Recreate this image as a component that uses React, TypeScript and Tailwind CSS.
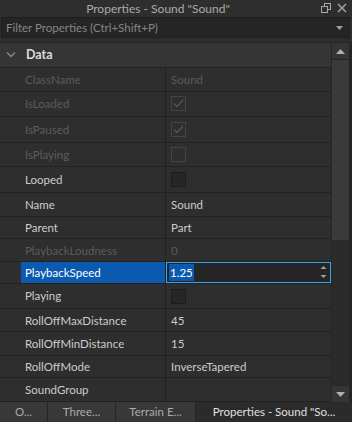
import React from 'react';

type Row = {
  name: string;
  h: number;
  kind: 'text' | 'check' | 'input';
  value?: string;
  checked?: boolean;
  disabled?: boolean;
};

const rows: Row[] = [
  { name: 'ClassName', h: 24, kind: 'text', value: 'Sound', disabled: true },
  { name: 'IsLoaded', h: 26, kind: 'check', checked: true, disabled: true },
  { name: 'IsPaused', h: 26, kind: 'check', checked: true, disabled: true },
  { name: 'IsPlaying', h: 25, kind: 'check', checked: false, disabled: true },
  { name: 'Looped', h: 26, kind: 'check', checked: false },
  { name: 'Name', h: 24, kind: 'text', value: 'Sound' },
  { name: 'Parent', h: 23, kind: 'text', value: 'Part' },
  { name: 'PlaybackLoudness', h: 23, kind: 'text', value: '0', disabled: true },
  { name: 'PlaybackSpeed', h: 22, kind: 'input', value: '1.25' },
  { name: 'Playing', h: 26, kind: 'check', checked: false },
  { name: 'RollOffMaxDistance', h: 23, kind: 'text', value: '45' },
  { name: 'RollOffMinDistance', h: 24, kind: 'text', value: '15' },
  { name: 'RollOffMode', h: 23, kind: 'text', value: 'InverseTapered' },
  { name: 'SoundGroup', h: 24, kind: 'text', value: '' },
];

const font = { fontFamily: '"Lato", "Noto Sans", sans-serif' };

function CheckBox({ checked, disabled }: { checked?: boolean; disabled?: boolean }) {
  return (
    <div
      className={`w-[15px] h-[15px] border flex items-center justify-center ${
        disabled ? 'border-[#444444] bg-[#2e2e2e]' : 'border-[#1c1c1c] bg-[#262626]'
      }`}
    >
      {checked && (
        <svg width="11" height="9" viewBox="0 0 11 9">
          <path d="M1 4.5 L4 7.5 L10 1" fill="none" stroke="#555555" strokeWidth="1.3" />
        </svg>
      )}
    </div>
  );
}

function PropRow({ row }: { row: Row }) {
  const selected = row.kind === 'input';
  const nameColor = row.disabled ? 'text-[#5c5c5c]' : selected ? 'text-white' : 'text-[#cccccc]';
  return (
    <div className="flex border-b border-[#222222]" style={{ height: row.h }}>
      <div className="w-[21px] shrink-0" />
      <div
        className={`w-[144px] shrink-0 flex items-center pl-[4px] text-[11.5px] ${nameColor} ${
          selected ? 'bg-[#0b5aaf]' : ''
        }`}
      >
        {row.name}
      </div>
      <div className="w-px bg-[#222222] shrink-0" />
      {row.kind === 'input' ? (
        <div className="flex-1 flex items-center justify-between border border-[#35a6e8] bg-[#252525] pl-[2px] pr-[3px]">
          <span className="bg-[#0b5aaf] text-white text-[11.5px] leading-[17px] px-px">{row.value}</span>
          <svg width="7" height="14" viewBox="0 0 7 14">
            <path d="M0.5 4 L3.5 1 L6.5 4 Z" fill="#a0a0a0" />
            <path d="M0.5 10 L3.5 13 L6.5 10 Z" fill="#a0a0a0" />
          </svg>
        </div>
      ) : (
        <div className="flex-1 flex items-center pl-[5px]">
          {row.kind === 'check' ? (
            <CheckBox checked={row.checked} disabled={row.disabled} />
          ) : (
            <span className={`text-[11.5px] ${row.disabled ? 'text-[#5c5c5c]' : 'text-[#cccccc]'}`}>
              {row.value}
            </span>
          )}
        </div>
      )}
    </div>
  );
}

export default function App() {
  return (
    <div className="w-[352px] h-[422px] bg-[#2e2e2e] flex flex-col overflow-hidden select-none" style={font}>
      {/* title bar */}
      <div className="h-[17px] relative flex items-center justify-center shrink-0">
        <span className="text-[12px] text-[#aaaaaa] leading-none ml-[-36px]">Properties - Sound "Sound"</span>
        <div className="absolute right-[5px] top-[3px] flex items-center gap-[6px]">
          <svg width="10" height="10" viewBox="0 0 10 10">
            <rect x="3.5" y="0.5" width="6" height="6" fill="none" stroke="#a8a8a8" />
            <rect x="0.5" y="3.5" width="6" height="6" fill="#2e2e2e" stroke="#a8a8a8" />
          </svg>
          <svg width="10" height="10" viewBox="0 0 10 10">
            <path d="M1 1 L9 9 M9 1 L1 9" stroke="#a8a8a8" strokeWidth="1.4" />
          </svg>
        </div>
      </div>

      {/* filter */}
      <div className="h-[21px] mx-[1px] mr-[2px] shrink-0 bg-[#252525] border border-[#1e1e1e] flex items-center justify-between pl-[4px] pr-[6px]">
        <span className="text-[11.5px] text-[#858585]">Filter Properties (Ctrl+Shift+P)</span>
        <svg width="7" height="4" viewBox="0 0 7 4">
          <path d="M0 0 L7 0 L3.5 4 Z" fill="#a0a0a0" />
        </svg>
      </div>

      <div className="h-[4px] shrink-0" />

      {/* main */}
      <div className="flex-1 flex min-h-0 border-t border-[#262626]">
        <div className="w-[331px] flex flex-col overflow-hidden">
          <div className="h-[25px] shrink-0 bg-[#353535] border-b border-[#222222] flex items-center">
            <svg width="10" height="6" viewBox="0 0 10 6" className="ml-[6px]">
              <path d="M1 0.5 L5 4.5 L9 0.5" fill="none" stroke="#8a8a8a" strokeWidth="1.3" />
            </svg>
            <span className="ml-[10px] text-[12.5px] font-bold text-[#dddddd]">Data</span>
          </div>
          {rows.map((r) => (
            <PropRow key={r.name} row={r} />
          ))}
        </div>
        <div className="w-px bg-[#262626] shrink-0" />
        {/* scrollbar */}
        <div className="w-[17px] shrink-0 flex flex-col bg-[#2b2b2b]">
          <div className="h-[17px] bg-[#353535] border-b border-[#262626] flex items-center justify-center">
            <svg width="9" height="5" viewBox="0 0 9 5">
              <path d="M0 5 L4.5 0 L9 5 Z" fill="#b0b0b0" />
            </svg>
          </div>
          <div className="h-[180px] bg-[#3a3a3a]" />
          <div className="flex-1" />
          <div className="h-[17px] bg-[#353535] border-t border-[#262626] flex items-center justify-center">
            <svg width="9" height="5" viewBox="0 0 9 5">
              <path d="M0 0 L4.5 5 L9 0 Z" fill="#b0b0b0" />
            </svg>
          </div>
        </div>
        <div className="w-[3px] bg-[#252525] shrink-0" />
      </div>

      {/* tabs */}
      <div className="h-[20px] shrink-0 flex bg-[#2b2b2b] text-[11.5px]">
        <div className="w-[48px] bg-[#383838] border-r border-[#262626] flex items-center justify-center text-[#aaaaaa]">O...</div>
        <div className="w-[68px] bg-[#383838] border-r border-[#262626] flex items-center justify-center text-[#aaaaaa]">Three...</div>
        <div className="w-[80px] bg-[#383838] border-r border-[#262626] flex items-center justify-center text-[#aaaaaa]">Terrain E...</div>
        <div className="flex-1 flex items-center justify-center text-[#e0e0e0]">Properties - Sound "So...</div>
      </div>
    </div>
  );
}
